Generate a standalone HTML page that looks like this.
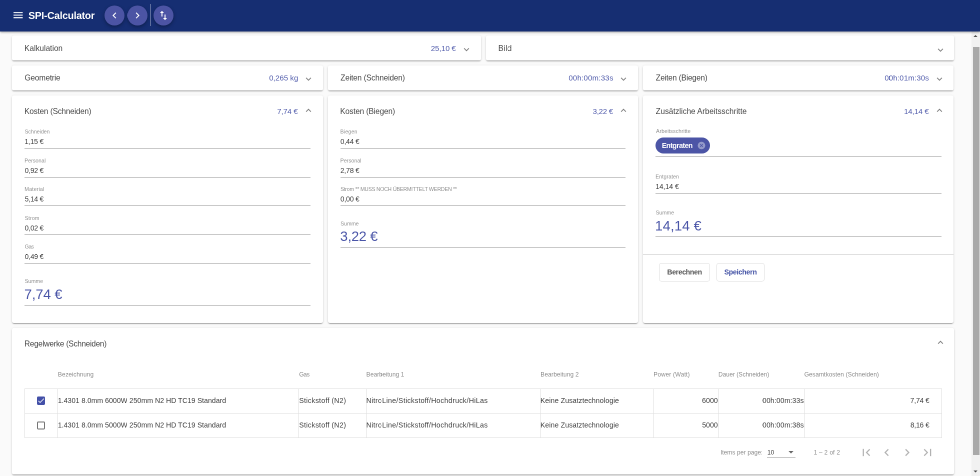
<!DOCTYPE html>
<html lang="de">
<head>
<meta charset="utf-8">
<title>SPI-Calculator</title>
<style>
  /* All lengths below are authored at 2x and the stage is scaled by 0.5,
     giving half-pixel precision at the 980x476 output size. */
  html, body { margin: 0; padding: 0; width: 980px; height: 476px; overflow: hidden; background: #fafafa; }
  body { font-family: "Liberation Sans", sans-serif; color: rgba(0,0,0,.87); }
  #stage { position: absolute; left: 0; top: 0; width: 1960px; height: 952px; transform: scale(.5); transform-origin: 0 0; overflow: hidden; will-change: transform; }
  .abs { position: absolute; }
  .nw { white-space: nowrap; }

  /* ---------- toolbar ---------- */
  #toolbar { position: absolute; left: 0; top: 0; width: 1960px; height: 63.2px; background: #162e72; box-shadow: 0 2px 4px -1px rgba(0,0,0,.2), 0 3px 4px 0 rgba(0,0,0,.12), 0 1px 6px 0 rgba(0,0,0,.08); z-index: 5; }
  #title { left: 57.4px; top: 16px; line-height: 30px; font-size: 20px; font-weight: 700; color: #fff; }
  .fab { position: absolute; top: 10.5px; width: 40px; height: 40px; border-radius: 50%; background: #4c54a4; box-shadow: 0 3px 6px rgba(0,0,0,.3); }
  .fab svg { position: absolute; left: 0; top: 0; width: 40px; height: 40px; }
  #tsep { left: 300px; top: 8px; width: 1.4px; height: 44px; background: rgba(255,255,255,.62); }

  /* ---------- panels ---------- */
  .panel { position: absolute; background: #fff; border-radius: 4px;
           box-shadow: 0 3px 1px -2px rgba(0,0,0,.26), 0 2px 2px 0 rgba(0,0,0,.16), 0 1px 5px 0 rgba(0,0,0,.12); }
  .ptitle { position: absolute; left: 25.7px; top: 10.2px; line-height: 30px; font-size: 15.7px; color: rgba(0,0,0,.74); white-space: nowrap; }
  .pdesc  { position: absolute; right: 50.4px; top: 10.2px; line-height: 30px; font-size: 15.2px; color: #515cac; white-space: nowrap; }
  .chev   { position: absolute; right: 19px; width: 20px; height: 20px; }
  .chev svg { width: 20px; height: 20px; display: block; }

  /* ---------- form fields ---------- */
  .field { position: absolute; left: 24.8px; right: 25px; height: 44px; }
  .field label { position: absolute; left: 0.8px; top: 0; line-height: 16px; font-size: 10.7px; color: rgba(0,0,0,.46); white-space: nowrap; }
  .field .val { position: absolute; left: 0.8px; top: 16.1px; line-height: 24px; font-size: 14.2px; color: rgba(0,0,0,.78); white-space: nowrap; }
  .field .ul { position: absolute; left: 0; right: 0; top: 41px; height: 1px; background: rgba(0,0,0,.42); }
  .field.big { height: 64px; }
  .field.big .val { top: 14.5px; line-height: 40px; font-size: 27.6px; color: #4a55a8; }
  .field.big .ul { top: 55.4px; }

  /* ---------- chip ---------- */
  .chip { position: absolute; left: 0; top: 20.4px; width: 108.8px; height: 32.8px; border-radius: 17px; background: #4c55a6; }
  .chip span { position: absolute; left: 13.4px; top: 4.4px; line-height: 24px; font-size: 14.3px; font-weight: 700; color: #fff; }
  .chip svg { position: absolute; left: 83px; top: 7.4px; width: 18px; height: 18px; }

  /* ---------- buttons ---------- */
  .btn { position: absolute; height: 35.8px; border: 1.2px solid rgba(0,0,0,.13); border-radius: 5px; background: #fff; box-sizing: content-box; }
  .btn span { position: absolute; left: 0; right: 0; top: 5.4px; line-height: 24px; text-align: center; font-size: 14.3px; font-weight: 700; white-space: nowrap; }

  /* ---------- table ---------- */
  #tbl { position: absolute; left: 24.4px; top: 121.2px; width: 1835.6px; height: 99px; box-sizing: border-box; border: 1.1px solid #dedede; }
  #tbl .v { position: absolute; top: 0; height: 97px; width: 1.1px; background: #dedede; }
  #tbl .h { position: absolute; left: 0; right: 0; top: 48.2px; height: 1.1px; background: #dedede; }
  .th { position: absolute; top: 83.2px; line-height: 20px; font-size: 12.2px; color: rgba(0,0,0,.48); white-space: nowrap; }
  .td { position: absolute; line-height: 24px; font-size: 14.2px; color: rgba(0,0,0,.78); white-space: nowrap; }
  .r1 { top: 133.4px; } .r2 { top: 182.4px; }
  .cb { position: absolute; left: 49.4px; width: 16.4px; height: 16.4px; border-radius: 2.4px; box-sizing: border-box; }
  .cb.on { background: #4350a8; }
  .cb.off { border: 2.1px solid rgba(0,0,0,.54); }
  .cb svg { position: absolute; left: 0; top: 0; width: 16.4px; height: 16.4px; }

  .pg { position: absolute; top: 238.8px; line-height: 20px; font-size: 12.2px; color: rgba(0,0,0,.48); white-space: nowrap; }
  
  /* ---------- fake scrollbar ---------- */
  #sb { position: absolute; left: 1942.6px; top: 63px; width: 17.4px; height: 889px; background: #f1f1f1; }
  #sbthumb { position: absolute; left: 3.6px; top: 31px; width: 12.8px; height: 816px; background: #a9a9a9; }
  .sba { position: absolute; left: 4.6px; width: 0; height: 0; border-left: 4.2px solid transparent; border-right: 4.2px solid transparent; }
</style>
</head>
<body>
<div id="stage">

  <!-- toolbar -->
  <div id="toolbar">
    <svg id="burger" class="abs" style="left:24.2px;top:17.7px;width:24.5px;height:24.5px" viewBox="0 0 24 24"><path d="M3 18h18v-2H3v2zm0-5h18v-2H3v2zm0-7v2h18V6H3z" fill="#fff"/></svg>
    <div id="title" class="abs nw" style="letter-spacing:-0.309px;margin-left:-0.58px;">SPI-Calculator</div>
    <div class="fab" style="left:208.6px"><svg viewBox="0 0 40 40"><g transform="translate(7.75 7.75) scale(1.0208)"><path d="M15.41 7.41L14 6l-6 6 6 6 1.41-1.41L10.83 12z" fill="#fff"/></g></svg></div>
    <div class="fab" style="left:254.6px"><svg viewBox="0 0 40 40"><g transform="translate(7.75 7.75) scale(1.0208)"><path d="M10 6L8.59 7.41 13.17 12l-4.58 4.59L10 18l6-6z" fill="#fff"/></g></svg></div>
    <div id="tsep" class="abs"></div>
    <div class="fab" style="left:307px"><svg viewBox="0 0 40 40"><g transform="translate(7.75 7.75) scale(1.0208)"><path d="M16 17.01V10h-2v7.01h-3L15 21l4-3.99h-3zM9 3L5 6.99h3V14h2V6.99h3L9 3z" fill="#fff"/></g></svg></div>
  </div>

  <!-- row 1 -->
  <div class="panel" style="left:24.4px;top:71.4px;width:937.6px;height:49.4px">
    <div class="ptitle" style="letter-spacing:-0.020px;margin-left:-1.29px;">Kalkulation</div>
    <div class="pdesc" style="letter-spacing:-0.106px;margin-right:-0.11px;">25,10 €</div>
    <div class="chev" style="top:17.8px"><svg viewBox="0 0 20 20"><path d="M5.2 7.6 L10 12.4 L14.8 7.6" fill="none" stroke="rgba(0,0,0,.5)" stroke-width="1.8"/></svg></div>
  </div>
  <div class="panel" style="left:972px;top:71.4px;width:935.6px;height:49.4px">
    <div class="ptitle" style="letter-spacing:0.273px;margin-left:-1.29px;">Bild</div>
    <div class="chev" style="top:18.8px;right:16.8px"><svg viewBox="0 0 20 20"><path d="M5.2 7.6 L10 12.4 L14.8 7.6" fill="none" stroke="rgba(0,0,0,.5)" stroke-width="1.8"/></svg></div>
  </div>

  <!-- row 2 -->
  <div class="panel" style="left:24.4px;top:131.4px;width:621.4px;height:49.4px">
    <div class="ptitle" style="top:9.4px;letter-spacing:-0.214px;margin-left:-0.79px;">Geometrie</div>
    <div class="pdesc" style="top:9.4px;letter-spacing:-0.006px;margin-right:-0.97px;">0,265 kg</div>
    <div class="chev" style="top:17px"><svg viewBox="0 0 20 20"><path d="M5.2 7.6 L10 12.4 L14.8 7.6" fill="none" stroke="rgba(0,0,0,.5)" stroke-width="1.8"/></svg></div>
  </div>
  <div class="panel" style="left:655.8px;top:131.4px;width:620.6px;height:49.4px">
    <div class="ptitle" style="top:9.4px;letter-spacing:-0.205px;margin-left:-0.49px;">Zeiten (Schneiden)</div>
    <div class="pdesc" style="top:9.4px;letter-spacing:0.155px;margin-right:-0.70px;">00h:00m:33s</div>
    <div class="chev" style="top:17px"><svg viewBox="0 0 20 20"><path d="M5.2 7.6 L10 12.4 L14.8 7.6" fill="none" stroke="rgba(0,0,0,.5)" stroke-width="1.8"/></svg></div>
  </div>
  <div class="panel" style="left:1286.4px;top:131.4px;width:620.4px;height:49.4px">
    <div class="ptitle" style="top:9.4px;letter-spacing:-0.284px;margin-left:-0.49px;">Zeiten (Biegen)</div>
    <div class="pdesc" style="right:49.4px;top:9.4px;letter-spacing:0.095px;margin-right:-0.64px;">00h:01m:30s</div>
    <div class="chev" style="top:17px;right:18.2px"><svg viewBox="0 0 20 20"><path d="M5.2 7.6 L10 12.4 L14.8 7.6" fill="none" stroke="rgba(0,0,0,.5)" stroke-width="1.8"/></svg></div>
  </div>

  <!-- row 3 -->
  <div class="panel" style="left:24.4px;top:191.2px;width:621.4px;height:455px">
    <div class="ptitle" style="top:16.8px;letter-spacing:-0.220px;margin-left:-1.29px;">Kosten (Schneiden)</div>
    <div class="pdesc" style="top:16.8px;letter-spacing:-0.194px;margin-right:-0.02px;">7,74 €</div>
    <div class="chev" style="top:19.4px"><svg viewBox="0 0 20 20"><path d="M5.2 12.4 L10 7.6 L14.8 12.4" fill="none" stroke="rgba(0,0,0,.5)" stroke-width="1.8"/></svg></div>
    <div class="field" style="top:63.8px"><label style="letter-spacing:-0.086px;margin-left:-0.48px;">Schneiden</label><div class="val" style="letter-spacing:-0.180px;margin-left:-1.08px;">1,15 €</div><div class="ul"></div></div>
    <div class="field" style="top:121.4px"><label style="letter-spacing:0.007px;margin-left:-0.88px;">Personal</label><div class="val" style="letter-spacing:-0.285px;margin-left:-0.55px;">0,92 €</div><div class="ul"></div></div>
    <div class="field" style="top:179px"><label style="letter-spacing:0.175px;margin-left:-0.88px;">Material</label><div class="val" style="letter-spacing:-0.282px;margin-left:-0.57px;">5,14 €</div><div class="ul"></div></div>
    <div class="field" style="top:236.6px"><label style="letter-spacing:0.188px;margin-left:-0.48px;">Strom</label><div class="val" style="letter-spacing:-0.285px;margin-left:-0.55px;">0,02 €</div><div class="ul"></div></div>
    <div class="field" style="top:294.2px"><label style="letter-spacing:-0.602px;margin-left:-0.54px;">Gas</label><div class="val" style="letter-spacing:-0.285px;margin-left:-0.55px;">0,49 €</div><div class="ul"></div></div>
    <div class="field big" style="top:363.1px"><label style="letter-spacing:-0.052px;margin-left:-0.48px;">Summe</label><div class="val" style="letter-spacing:-0.147px;margin-left:-1.41px;">7,74 €</div><div class="ul"></div></div>
  </div>

  <div class="panel" style="left:655.8px;top:191.2px;width:620.6px;height:455px">
    <div class="ptitle" style="top:16.8px;letter-spacing:-0.173px;margin-left:-1.29px;">Kosten (Biegen)</div>
    <div class="pdesc" style="top:16.8px;letter-spacing:-0.313px;margin-right:0.10px;">3,22 €</div>
    <div class="chev" style="top:19.4px"><svg viewBox="0 0 20 20"><path d="M5.2 12.4 L10 7.6 L14.8 12.4" fill="none" stroke="rgba(0,0,0,.5)" stroke-width="1.8"/></svg></div>
    <div class="field" style="top:63.8px"><label style="letter-spacing:0.191px;margin-left:-0.88px;">Biegen</label><div class="val" style="letter-spacing:-0.285px;margin-left:-0.55px;">0,44 €</div><div class="ul"></div></div>
    <div class="field" style="top:121.4px"><label style="letter-spacing:0.007px;margin-left:-0.88px;">Personal</label><div class="val" style="letter-spacing:-0.253px;margin-left:-0.71px;">2,78 €</div><div class="ul"></div></div>
    <div class="field" style="top:179px"><label style="letter-spacing:-0.333px;margin-left:-0.48px;">Strom ** MUSS NOCH ÜBERMITTELT WERDEN **</label><div class="val" style="letter-spacing:-0.285px;margin-left:-0.55px;">0,00 €</div><div class="ul"></div></div>
    <div class="field big" style="top:247.4px"><label style="letter-spacing:-0.052px;margin-left:-0.48px;">Summe</label><div class="val" style="letter-spacing:-0.299px;margin-left:-1.05px;">3,22 €</div><div class="ul"></div></div>
  </div>

  <div class="panel" style="left:1286.4px;top:191.2px;width:620.4px;height:455px">
    <div class="ptitle" style="top:16.8px;letter-spacing:-0.011px;margin-left:-0.49px;">Zusätzliche Arbeitsschritte</div>
    <div class="pdesc" style="top:16.8px;right:49.4px;letter-spacing:-0.173px;margin-right:-0.05px;">14,14 €</div>
    <div class="chev" style="top:19.4px;right:18.2px"><svg viewBox="0 0 20 20"><path d="M5.2 12.4 L10 7.6 L14.8 12.4" fill="none" stroke="rgba(0,0,0,.5)" stroke-width="1.8"/></svg></div>
    <div class="field" style="top:63px;right:23.8px;height:62px">
      <label style="letter-spacing:0.115px;margin-left:-0.02px;">Arbeitsschritte</label>
      <div class="chip"><span style="letter-spacing:-0.599px;margin-left:-0.96px;">Entgraten</span>
        <svg viewBox="0 0 18 18"><circle cx="9" cy="9" r="7.6" fill="rgba(255,255,255,.4)"/><path d="M6.2 6.2 L11.8 11.8 M11.8 6.2 L6.2 11.8" stroke="#4c55a6" stroke-width="1.5" fill="none"/></svg>
      </div>
      <div class="ul" style="top:57.8px"></div>
    </div>
    <div class="field" style="top:153.4px;right:23.8px"><label style="letter-spacing:0.060px;margin-left:-0.88px;">Entgraten</label><div class="val" style="letter-spacing:-0.066px;margin-left:-1.08px;">14,14 €</div><div class="ul"></div></div>
    <div class="field big" style="top:226.2px;right:23.8px"><label style="letter-spacing:-0.052px;margin-left:-0.48px;">Summe</label><div class="val" style="letter-spacing:0.168px;margin-left:-2.10px;">14,14 €</div><div class="ul"></div></div>
    <div class="abs" style="left:0;right:0;top:316.6px;height:1.2px;background:rgba(0,0,0,.12)"></div>
    <div class="btn" style="left:32px;top:334.4px;width:99.6px"><span style="color:rgba(0,0,0,.68);letter-spacing:-0.497px;padding-right:0.29px;">Berechnen</span></div>
    <div class="btn" style="left:146.4px;top:334.4px;width:94.4px"><span style="color:#4453a6;letter-spacing:-0.467px;padding-left:0.00px;">Speichern</span></div>
  </div>

  <!-- row 4 -->
  <div class="panel" style="left:24.4px;top:655.8px;width:1883.6px;height:292.8px">
    <div class="ptitle" style="top:17px;letter-spacing:-0.341px;margin-left:-1.29px;">Regelwerke (Schneiden)</div>
    <div class="chev" style="top:19.4px;right:17.4px"><svg viewBox="0 0 20 20"><path d="M5.2 12.4 L10 7.6 L14.8 12.4" fill="none" stroke="rgba(0,0,0,.5)" stroke-width="1.8"/></svg></div>

    <div class="th" style="left:92.4px;letter-spacing:0.094px;margin-left:-1.00px;">Bezeichnung</div>
    <div class="th" style="left:574.4px;letter-spacing:-0.613px;margin-left:-0.61px;">Gas</div>
    <div class="th" style="left:709.2px;letter-spacing:-0.007px;margin-left:-1.00px;">Bearbeitung 1</div>
    <div class="th" style="left:1057.6px;letter-spacing:0.062px;margin-left:-1.00px;">Bearbeitung 2</div>
    <div class="th" style="left:1283.6px;letter-spacing:0.176px;margin-left:-1.00px;">Power (Watt)</div>
    <div class="th" style="left:1413.4px;letter-spacing:-0.047px;margin-left:-1.00px;">Dauer (Schneiden)</div>
    <div class="th" style="left:1584.6px;letter-spacing:0.080px;margin-left:-0.61px;">Gesamtkosten (Schneiden)</div>

    <div id="tbl">
      <div class="h"></div>
      <div class="v" style="left:65.4px"></div>
      <div class="v" style="left:546.8px"></div>
      <div class="v" style="left:682.4px"></div>
      <div class="v" style="left:1030px"></div>
      <div class="v" style="left:1256.2px"></div>
      <div class="v" style="left:1386px"></div>
      <div class="v" style="left:1558.8px"></div>
    </div>

    <div class="cb on" style="top:137.6px"><svg viewBox="0 0 24 24"><path d="M4.1,12.7 9,17.6 20.3,6.3" fill="none" stroke="#fff" stroke-width="2.2"/></svg></div>
    <div class="cb off" style="top:186.8px"></div>

    <div class="td r1" style="left:92.4px;letter-spacing:-0.020px;margin-left:-1.08px;">1.4301 8.0mm 6000W 250mm N2 HD TC19 Standard</div>
    <div class="td r1" style="left:574.4px;letter-spacing:0.351px;margin-left:-0.64px;">Stickstoff (N2)</div>
    <div class="td r1" style="left:709.2px;letter-spacing:0.371px;margin-left:-1.16px;">NitroLine/Stickstoff/Hochdruck/HiLas</div>
    <div class="td r1" style="left:1057.6px;letter-spacing:0.071px;margin-left:-1.16px;">Keine Zusatztechnologie</div>
    <div class="td r1" style="right:472.8px;letter-spacing:0.066px;margin-right:-0.63px;">6000</div>
    <div class="td r1" style="right:301px;letter-spacing:0.046px;margin-right:-0.55px;">00h:00m:33s</div>
    <div class="td r1" style="right:49.4px;letter-spacing:-0.251px;margin-right:0.05px;">7,74 €</div>

    <div class="td r2" style="left:92.4px;letter-spacing:-0.020px;margin-left:-1.08px;">1.4301 8.0mm 5000W 250mm N2 HD TC19 Standard</div>
    <div class="td r2" style="left:574.4px;letter-spacing:0.351px;margin-left:-0.64px;">Stickstoff (N2)</div>
    <div class="td r2" style="left:709.2px;letter-spacing:0.371px;margin-left:-1.16px;">NitroLine/Stickstoff/Hochdruck/HiLas</div>
    <div class="td r2" style="left:1057.6px;letter-spacing:0.071px;margin-left:-1.16px;">Keine Zusatztechnologie</div>
    <div class="td r2" style="right:472.8px;letter-spacing:0.014px;margin-right:-0.58px;">5000</div>
    <div class="td r2" style="right:301px;letter-spacing:0.046px;margin-right:-0.55px;">00h:00m:38s</div>
    <div class="td r2" style="right:49.4px;letter-spacing:-0.273px;margin-right:0.07px;">8,16 €</div>

    <div class="pg" style="left:1417.6px;letter-spacing:-0.017px;margin-left:-1.12px;">Items per page:</div>
    <div class="pg" style="left:1510.4px;color:rgba(0,0,0,.8)">10</div>
    <div class="abs" style="left:1509.6px;top:259.4px;width:57px;height:1.2px;background:rgba(0,0,0,.42)"></div>
    <div class="abs" style="left:1552.4px;top:246.6px;width:0;height:0;border-left:5px solid transparent;border-right:5px solid transparent;border-top:5.2px solid rgba(0,0,0,.6)"></div>
    <div class="pg" style="left:1604px;letter-spacing:0.196px;margin-left:-0.93px;">1 – 2 of 2</div>
    <svg class="abs" style="left:0;top:0;width:1884px;height:292px" viewBox="0 0 1884 292"><g fill="rgba(0,0,0,.3)"><g transform="translate(1694.30 234.70) scale(1.1917)"><path d="M18.41 16.59L13.82 12l4.59-4.59L17 6l-6 6 6 6zM6 6h2v12H6z"/></g><g transform="translate(1735.10 234.70) scale(1.1917)"><path d="M15.41 7.41L14 6l-6 6 6 6 1.41-1.41L10.83 12z"/></g><g transform="translate(1776.10 234.70) scale(1.1917)"><path d="M10 6L8.59 7.41 13.17 12l-4.58 4.59L10 18l6-6z"/></g><g transform="translate(1816.90 234.70) scale(1.1917)"><path d="M5.59 7.41L10.18 12l-4.59 4.59L7 18l6-6-6-6zM16 6h2v12h-2z"/></g></g></svg>
  </div>

  <!-- scrollbar -->
  <div id="sb">
    <div class="sba" style="top:6.6px;border-bottom:4.6px solid #505050"></div>
    <div id="sbthumb"></div>
    <div class="sba" style="top:878px;border-top:4.6px solid #505050"></div>
  </div>

</div>
</body>
</html>
